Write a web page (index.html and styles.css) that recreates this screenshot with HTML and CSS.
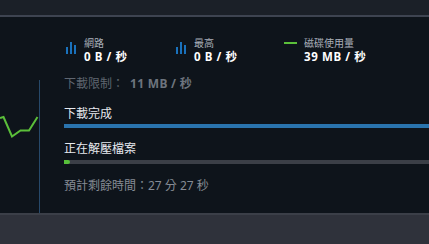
FILE: index.html
```html
<!DOCTYPE html>
<html>
<head>
<meta charset="utf-8">
<link rel="stylesheet" href="styles.css">
</head>
<body>
<div class="topbar"></div>
<div class="main">
  <div class="side">
    <div class="graph">
      <svg width="39" height="60" viewBox="0 0 39 60">
        <polyline points="0,38 3.5,37 12,56.5 20.5,50.5 29,50.5 37.5,37" fill="none" stroke="#5bbf3a" stroke-width="2"/>
      </svg>
    </div>
  </div>
  <div class="content">
    <div class="stats">
      <div class="stat s1">
        <svg class="ico" width="14" height="12" viewBox="0 0 14 12"><rect x="0" y="5" width="2" height="7" fill="#1a72bd"/><rect x="4" y="0" width="2" height="12" fill="#1a72bd"/><rect x="8" y="3" width="2" height="9" fill="#1a72bd"/></svg>
        <div class="txt"><div class="lbl">網路</div><div class="val">0 B / 秒</div></div>
      </div>
      <div class="stat s2">
        <svg class="ico" width="14" height="12" viewBox="0 0 14 12"><rect x="0" y="5" width="2" height="7" fill="#1a72bd"/><rect x="4" y="0" width="2" height="12" fill="#1a72bd"/><rect x="8" y="3" width="2" height="9" fill="#1a72bd"/></svg>
        <div class="txt"><div class="lbl">最高</div><div class="val">0 B / 秒</div></div>
      </div>
      <div class="stat s3">
        <span class="gline"></span>
        <div class="txt"><div class="lbl">磁碟使用量</div><div class="val">39 MB / 秒</div></div>
      </div>
    </div>
    <div class="limit">下載限制：<b>11 MB / 秒</b></div>
    <div class="task first">下載完成</div>
    <div class="bar"><div class="fill blue" style="width:100%"></div></div>
    <div class="task">正在解壓檔案</div>
    <div class="bar grey"><div class="fill green" style="width:6px"></div></div>
    <div class="eta">預計剩餘時間：27 分 27 秒</div>
  </div>
</div>
<div class="bottom"></div>
</body>
</html>
```
FILE: styles.css
```css
html, body {
  margin: 0;
  padding: 0;
  width: 429px;
  height: 244px;
  overflow: hidden;
  background: #0e141b;
  font-family: "Noto Sans", "Noto Sans CJK TC", sans-serif;
}
.topbar {
  height: 15px;
  background: #1b2028;
  border-bottom: 2px solid #3e4451;
}
.main {
  display: flex;
  height: 196px;
  background: #0e141b;
}
.side {
  width: 40px;
  flex: none;
  display: flex;
  flex-direction: column;
  padding-top: 63px;
  box-sizing: border-box;
}
.graph {
  flex: 1;
  width: 39px;
  border-right: 1px solid #27496a;
}
.graph svg { display: block; }
.content {
  flex: 1;
  padding-left: 24px;
  padding-top: 20px;
  overflow: hidden;
}
.stats {
  display: flex;
  padding-left: 2px;
}
.stat {
  display: flex;
  align-items: flex-start;
}
.s1 { width: 110px; }
.s2 { width: 108px; }
.ico { margin-top: 5px; width: 14px; flex: none; margin-right: 4px; }
.gline {
  display: block;
  width: 13px;
  height: 2px;
  background: #5bbf3a;
  margin-top: 5px;
  margin-right: 7px;
  flex: none;
}
.lbl {
  font-size: 10px;
  line-height: 13px;
  color: #aab0ba;
}
.val {
  font-size: 11.5px;
  line-height: 14px;
  font-weight: 700;
  color: #ffffff;
  letter-spacing: 0.6px;
}
.limit {
  margin-top: 12px;
  font-size: 12px;
  line-height: 16px;
  color: #5f6670;
}
.limit b { font-weight: 700; color: #6d747e; margin-left: 6px; letter-spacing: 0.3px; }
.task {
  margin-top: 13px;
  font-size: 12px;
  line-height: 16px;
  color: #e6e9ee;
}
.task.first { margin-top: 14px; }
.bar {
  margin-top: 2px;
  height: 4px;
  background: #0e141b;
}
.bar.grey { background: #3b3f47; margin-top: 3px; }
.fill { height: 100%; }
.fill.blue { background: #2a74ae; }
.fill.green { background: #57c03a; border-radius: 0 2px 2px 0; }
.eta {
  margin-top: 14px;
  font-size: 12px;
  line-height: 16px;
  color: #858b94;
}
.bottom {
  height: 29px;
  background: #2f323b;
  border-top: 2px solid #3b3f48;
}
```
